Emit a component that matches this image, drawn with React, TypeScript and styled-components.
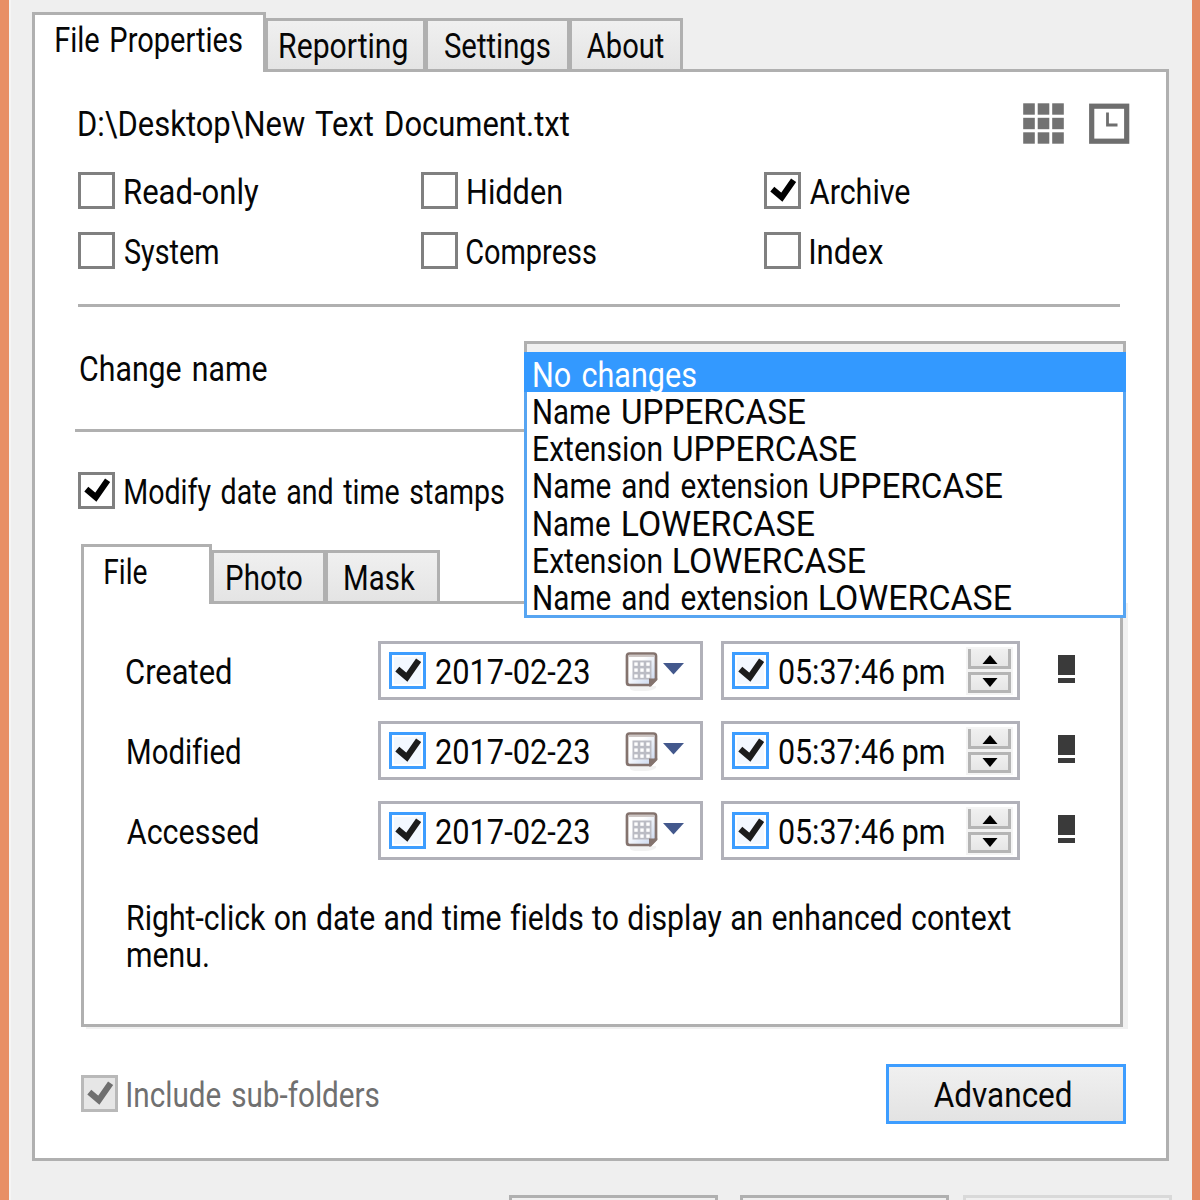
import React, { useMemo } from "react";
import styled, { createGlobalStyle } from "styled-components";

const FONT = '"Roboto", "Liberation Sans", sans-serif';
const SIZE = 35;

const GlobalStyle = createGlobalStyle`
  * { box-sizing: border-box; }
  body { margin: 0; background: #efefef; overflow: hidden; }
`;

const LINE = "#b0b0b0";

/* ---------- text ---------- */

const TextBox = styled.span<{ $w: number; $color: string }>`
  display: block;
  flex: none;
  width: ${(p) => p.$w}px;
  height: 36px;
  color: ${(p) => p.$color};
`;

const TextRun = styled.span<{ $space: number }>`
  display: inline-block;
  font: 400 ${SIZE}px/36px ${FONT};
  word-spacing: ${(p) => p.$space}px;
  font-variant-ligatures: none;
  white-space: pre;
  transform-origin: 0 0;
`;

let ctx: CanvasRenderingContext2D | null = null;

function inkOf(text: string, space: number) {
  if (!ctx) ctx = document.createElement("canvas").getContext("2d")!;
  ctx.font = `400 ${SIZE}px ${FONT}`;
  const m = ctx.measureText(text);
  const gaps = text.split(" ").length - 1;
  return { left: -m.actualBoundingBoxLeft, right: m.actualBoundingBoxRight + gaps * space };
}

interface TextProps {
  w: number;
  color?: string;
  space?: number;
  children: string;
}

/* A label condensed horizontally so its glyphs fill exactly `w` pixels. */
function Text({ w, color = "#060606", space = 3, children }: TextProps) {
  const transform = useMemo(() => {
    const { left, right } = inkOf(children, space);
    const k = (w - 0.8) / (right - left);
    return `translate(${(-left * k + 0.8).toFixed(2)}px, 1px) scaleX(${k.toFixed(4)})`;
  }, [children, w, space]);
  return (
    <TextBox $w={w} $color={color}>
      <TextRun $space={space} style={{ transform }}>{children}</TextRun>
    </TextBox>
  );
}

/* ---------- window ---------- */

const Window = styled.div`
  display: flex;
  flex-direction: column;
  width: 1200px;
  height: 1200px;
  overflow: hidden;
  background: #efefef;
  border-left: 9px solid #e88f66;
  border-right: 8px solid #e38a62;
  box-shadow: inset 2px 0 0 #f5f5f5;
  padding: 12px 23px 0 23px;
`;

const TabStrip = styled.div`
  display: flex;
  align-items: flex-end;
  flex: none;
  height: 60px;
  position: relative;
  z-index: 1;
`;

const Tab = styled.div<{ $w: number; $pad: number; $active?: boolean }>`
  flex: none;
  width: ${(p) => p.$w}px;
  height: ${(p) => (p.$active ? 60 : 54)}px;
  padding: 7px 0 0 ${(p) => p.$pad}px;
  border: 3px solid ${LINE};
  border-bottom-width: ${(p) => (p.$active ? 0 : 3)}px;
  border-left-width: ${(p) => (p.$active ? 3 : 2)}px;
  background: ${(p) => (p.$active ? "#fff" : "linear-gradient(#f0f0f0, #e4e4e4)")};
`;

const MainPanel = styled.div`
  display: flex;
  flex-direction: column;
  flex: none;
  width: 1137px;
  height: 1092px;
  margin-top: -3px;
  border: 3px solid ${LINE};
  background: #fff;
  padding: 31px 38px 0 43px;
`;

const PathRow = styled.div`
  display: flex;
  height: 69px;
  flex: none;
  justify-content: space-between;
  padding-top: 3px;
`;

const Tools = styled.div`
  display: flex;
  gap: 25px;
  margin: -3px -2px 0 0;
`;

const Attributes = styled.div`
  display: grid;
  grid-template-columns: 343px 343px 1fr;
  grid-auto-rows: 60px;
  height: 132px;
  flex: none;
`;

const CheckRow = styled.div<{ $gap?: number }>`
  display: flex;
  align-items: flex-start;
  gap: ${(p) => p.$gap ?? 9}px;
`;

type BoxKind = "plain" | "blue" | "disabled";
const boxBorder = { plain: "#808080", blue: "#3d9dff", disabled: "#b9b9b9" };
const boxFill = { plain: "#fff", blue: "#f3f8ff", disabled: "#e6e6e6" };
const tickColor = { plain: "#000", blue: "#1c1c1c", disabled: "#6f6f6f" };

const Box = styled.span<{ $kind: BoxKind }>`
  display: block;
  flex: none;
  width: 37px;
  height: 37px;
  border: 3px solid ${(p) => boxBorder[p.$kind]};
  background: ${(p) => boxFill[p.$kind]};
  box-shadow: ${(p) => (p.$kind === "blue" ? "inset 0 0 0 2px #fff" : "none")};
  svg { display: block; }
`;

function Checkbox({ checked, kind = "plain" }: { checked?: boolean; kind?: BoxKind }) {
  return (
    <Box $kind={kind}>
      {checked && (
        <svg width="31" height="31" viewBox="3 3 31 31" fill="none">
          <path d="M8.3 17.2 L17.8 25.2 L29.6 8.2" stroke={tickColor[kind]} strokeWidth="6.2" />
        </svg>
      )}
    </Box>
  );
}

const LabelSlot = styled.span`
  display: block;
  padding-top: 2px;
`;

const Rule = styled.div<{ $w: number; $shift?: number }>`
  flex: none;
  width: ${(p) => p.$w}px;
  height: 3px;
  margin-left: ${(p) => p.$shift ?? 0}px;
  background: ${LINE};
`;

const NameRow = styled.div`
  display: flex;
  flex: none;
  justify-content: space-between;
  height: 122px;
  padding: 34px 2px 0 1px;
`;

const NameLabel = styled.div`
  padding: 10px 0 0 1px;
`;

const Combo = styled.div`
  position: relative;
  width: 602px;
  height: 60px;
  border: 3px solid ${LINE};
  background: #f0f0f0;
`;

const DropList = styled.div`
  position: absolute;
  z-index: 5;
  left: -3px;
  top: 8px;
  width: 602px;
  height: 266px;
  border: 3px solid #57a5f2;
  border-top-width: 0;
  background: #fff;
`;

const DropItem = styled.div<{ $selected?: boolean }>`
  display: flex;
  gap: 12px;
  height: ${(p) => (p.$selected ? 40 : 37.2)}px;
  margin: 0 ${(p) => (p.$selected ? -3 : 0)}px;
  padding: ${(p) => (p.$selected ? "5px 0 0 9px" : "2px 0 0 6px")};
  background: ${(p) => (p.$selected ? "#3399ff" : "transparent")};
`;

const Modify = styled.div`
  flex: none;
  height: 112px;
  padding-top: 40px;
`;

const Inner = styled.div`
  display: flex;
  flex-direction: column;
  flex: none;
  width: 1042px;
  margin-left: 3px;
`;

const InnerPanel = styled.div`
  display: flex;
  flex-direction: column;
  flex: none;
  height: 426px;
  margin-top: -3px;
  border: 3px solid ${LINE};
  background: #fff;
  box-shadow: 5px 2px 0 #f1f1f1;
  padding: 37px 42px 0 42px;
`;

const StampRow = styled.div`
  display: flex;
  flex: none;
  height: 80px;
`;

const StampLabel = styled.div<{ $indent: number }>`
  width: 252px;
  flex: none;
  padding: 13px 0 0 ${(p) => p.$indent}px;
`;

const Field = styled.div<{ $w: number }>`
  display: flex;
  flex: none;
  width: ${(p) => p.$w}px;
  height: 59px;
  margin-right: 18px;
  padding: 8px 0 0 8px;
  border: 3px solid #b1b1b9;
  background: #fff;
`;

const FieldText = styled.div`
  margin-left: 9px;
  padding-top: 2px;
`;

const DateButton = styled.div`
  margin-left: 36px;
`;

const Spinner = styled.div`
  display: flex;
  flex-direction: column;
  align-self: flex-start;
  gap: 3px;
  width: 43px;
  margin: -3px 0 0 24px;
  background: #f2f2f2;
  box-shadow: 0 0 0 2px #f4f4f4;
`;

const SpinButton = styled.div<{ $up?: boolean }>`
  display: flex;
  justify-content: center;
  padding-top: ${(p) => (p.$up ? 6 : 3)}px;
  height: ${(p) => (p.$up ? 20 : 21)}px;
  border: 3px solid #b5b5b5;
  border-top-width: ${(p) => (p.$up ? 0 : 3)}px;
  background: linear-gradient(#f0f0f0, #e6e6e6);
  svg { display: block; flex: none; }
`;

const Mark = styled.div`
  width: 17.5px;
  margin: 14px 0 0 19.5px;
  &::before, &::after {
    content: "";
    display: block;
    background: #3a3a3a;
  }
  &::before { height: 20px; margin-bottom: 3px; }
  &::after { height: 5px; }
`;

const Hint = styled.div`
  display: flex;
  flex-direction: column;
  gap: 1px;
  padding: 19px 0 0 1px;
`;

const Footer = styled.div`
  display: flex;
  flex: none;
  justify-content: space-between;
  width: 1048px;
  margin-top: 37px;
  padding-left: 3px;
`;

const IncludeSlot = styled.div`
  padding-top: 11px;
`;

const Button = styled.div`
  width: 240px;
  height: 60px;
  padding: 10px 0 0 44px;
  border: 3px solid #3d9dff;
  background: linear-gradient(#f0f0f0, #e3e3e3);
`;

const DialogButtons = styled.div`
  display: flex;
  flex: none;
  margin: 34px 0 0 477px;
`;

const DialogButton = styled.div<{ $disabled?: boolean; $gap: number }>`
  flex: none;
  width: 209px;
  height: 60px;
  margin-right: ${(p) => p.$gap}px;
  border: 3px solid ${(p) => (p.$disabled ? "#d9d9d9" : LINE)};
  background: #f0f0f0;
`;

/* ---------- drawings ---------- */

function GridIcon() {
  const at = [0, 14.5, 29];
  return (
    <svg width="41" height="41" viewBox="0 0 41 41">
      {at.map((y) => at.map((x) => <rect key={`${x}-${y}`} x={x + 0.2} y={y + 0.3} width="11.6" height="11.4" fill="#727272" />))}
    </svg>
  );
}

function ClockIcon() {
  return (
    <svg width="41" height="41" viewBox="0 0 41 41" fill="none" stroke="#6e6e6e">
      <rect x="2.7" y="3.2" width="35" height="35" strokeWidth="5.2" />
      <path d="M18.5 9.5 V22 H28.5" strokeWidth="2.8" />
    </svg>
  );
}

function CalendarIcon() {
  const at = [0, 6, 12];
  return (
    <svg width="62" height="42" viewBox="0 0 62 42">
      <defs>
        <linearGradient id="sheet" x1="0" y1="0" x2="1" y2="1">
          <stop offset="0.35" stopColor="#ffffff" />
          <stop offset="1" stopColor="#c3d2ec" />
        </linearGradient>
      </defs>
      <path d="M5 34 H31 V36 Q27 39 20 39 H10 Q6 38.5 5 37 Z" fill="#f2f2f2" />
      <path d="M4.5 1.5 H28.5 Q31 1.5 31 4 V27 L25 33 H4.5 Q2 33 2 30.5 V4 Q2 1.5 4.5 1.5 Z" fill="url(#sheet)" stroke="#84736e" strokeWidth="2.7" />
      <path d="M4 4 H29" stroke="#cdc6c4" strokeWidth="2" />
      <rect x="7.5" y="8.5" width="19" height="19" fill="#bbbcc4" />
      {at.map((y) => at.map((x) => <rect key={`${x}-${y}`} x={9.3 + x} y={10.4 + y} width="3.4" height="3.4" fill="#fff" />))}
      <path d="M24 34.5 V26.5 H32.3 V28 L26 34.5 Z" fill="#84736e" />
      <path d="M38 11 H59 L48.5 22.5 Z" fill="#43588c" />
    </svg>
  );
}

function Triangle({ up }: { up?: boolean }) {
  return (
    <svg width="16" height="9" viewBox="0 0 16 9">
      <path d={up ? "M8 0 L15.5 9 H0.5 Z" : "M8 9 L15.5 0 H0.5 Z"} fill="#000" />
    </svg>
  );
}

/* ---------- data ---------- */

const attributes = [
  { label: "Read-only", w: 135, checked: false, gap: 9 },
  { label: "Hidden", w: 94, checked: false, gap: 9 },
  { label: "Archive", w: 101, checked: true, gap: 8 },
  { label: "System", w: 94, checked: false, gap: 9 },
  { label: "Compress", w: 130, checked: false, gap: 8 },
  { label: "Index", w: 73, checked: false, gap: 9 },
];

type Part = [text: string, width: number];
const upper: Part = ["UPPERCASE", 183];
const lower: Part = ["LOWERCASE", 192];
const subjects: Part[] = [
  ["Name", 77],
  ["Extension", 128],
  ["Name and extension", 274],
];
const renameOptions: Part[][] = [
  [["No changes", 163]],
  ...subjects.map((s) => [s, upper]),
  ...subjects.map((s) => [s, lower]),
];

const stamps = [
  { label: "Created", w: 105, indent: 0 },
  { label: "Modified", w: 112, indent: 1 },
  { label: "Accessed", w: 132, indent: 0 },
];

export default function App() {
  return (
    <>
      <GlobalStyle />
      <Window>
        <TabStrip>
          <Tab $w={234} $pad={20} $active><Text w={187}>File Properties</Text></Tab>
          <Tab $w={160} $pad={11}><Text w={128}>Reporting</Text></Tab>
          <Tab $w={144} $pad={16}><Text w={106}>Settings</Text></Tab>
          <Tab $w={113} $pad={14}><Text w={78}>About</Text></Tab>
        </TabStrip>
        <MainPanel>
          <PathRow>
            <Text w={492}>D:\Desktop\New Text Document.txt</Text>
            <Tools>
              <GridIcon />
              <ClockIcon />
            </Tools>
          </PathRow>
          <Attributes>
            {attributes.map((a) => (
              <CheckRow key={a.label} $gap={a.gap}>
                <Checkbox checked={a.checked} />
                <LabelSlot><Text w={a.w}>{a.label}</Text></LabelSlot>
              </CheckRow>
            ))}
          </Attributes>
          <Rule $w={1042} />
          <NameRow>
            <NameLabel><Text w={187}>Change name</Text></NameLabel>
            <Combo>
              <DropList>
                {renameOptions.map((parts, i) => (
                  <DropItem key={i} $selected={i === 0}>
                    {parts.map(([text, w]) => (
                      <Text key={text} w={w} color={i === 0 ? "#fff" : undefined}>{text}</Text>
                    ))}
                  </DropItem>
                ))}
              </DropList>
            </Combo>
          </NameRow>
          <Rule $w={449} $shift={-3} />
          <Modify>
            <CheckRow>
              <Checkbox checked />
              <LabelSlot><Text w={380}>Modify date and time stamps</Text></LabelSlot>
            </CheckRow>
          </Modify>
          <Inner>
            <TabStrip>
              <Tab $w={131} $pad={20} $active><Text w={43}>File</Text></Tab>
              <Tab $w={114} $pad={12}><Text w={76}>Photo</Text></Tab>
              <Tab $w={114} $pad={16}><Text w={71}>Mask</Text></Tab>
            </TabStrip>
            <InnerPanel>
              {stamps.map((s) => (
                <StampRow key={s.label}>
                  <StampLabel $indent={s.indent}><Text w={s.w}>{s.label}</Text></StampLabel>
                  <Field $w={325}>
                    <Checkbox checked kind="blue" />
                    <FieldText><Text w={154}>2017-02-23</Text></FieldText>
                    <DateButton><CalendarIcon /></DateButton>
                  </Field>
                  <Field $w={299}>
                    <Checkbox checked kind="blue" />
                    <FieldText><Text w={166} space={-1}>05:37:46 pm</Text></FieldText>
                    <Spinner>
                      <SpinButton $up><Triangle up /></SpinButton>
                      <SpinButton><Triangle /></SpinButton>
                    </Spinner>
                  </Field>
                  <Mark />
                </StampRow>
              ))}
              <Hint>
                <Text w={883} space={1}>Right-click on date and time fields to display an enhanced context</Text>
                <Text w={81}>menu.</Text>
              </Hint>
            </InnerPanel>
          </Inner>
          <Footer>
            <IncludeSlot>
              <CheckRow>
                <Checkbox checked kind="disabled" />
                <LabelSlot><Text w={252} color="#707070">Include sub-folders</Text></LabelSlot>
              </CheckRow>
            </IncludeSlot>
            <Button><Text w={138}>Advanced</Text></Button>
          </Footer>
        </MainPanel>
        <DialogButtons>
          <DialogButton $gap={22} />
          <DialogButton $gap={14} />
          <DialogButton $gap={0} $disabled />
        </DialogButtons>
      </Window>
    </>
  );
}
